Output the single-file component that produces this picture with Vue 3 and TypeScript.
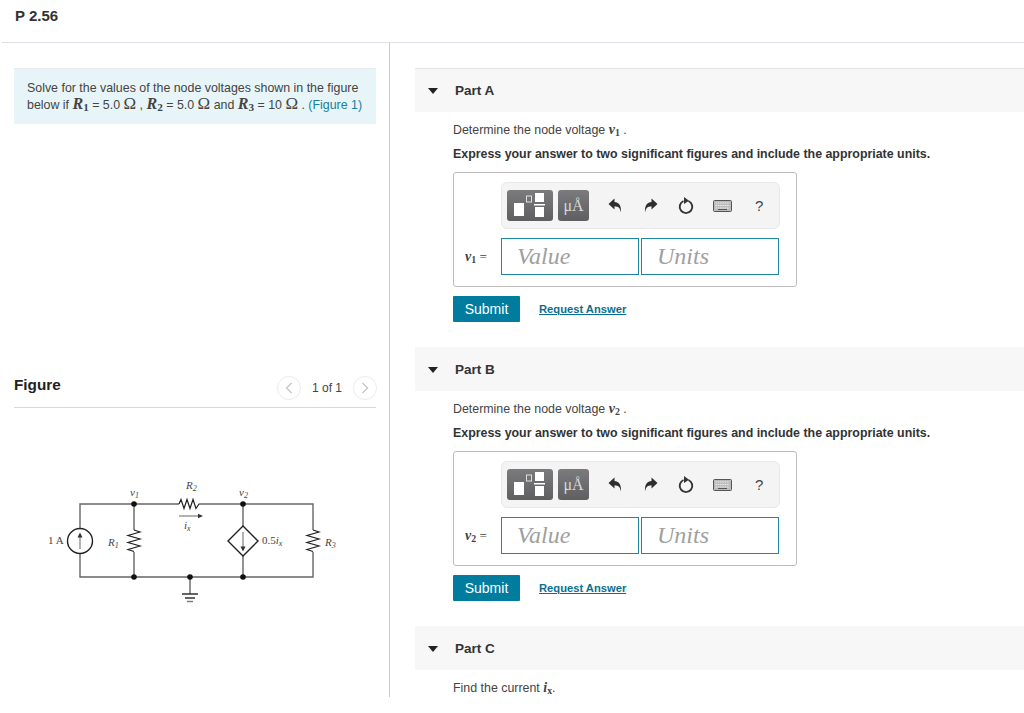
<script setup lang="ts">
interface Part { id: string; sym: string; sub: string }
const parts: Part[] = [
  { id: 'A', sym: 'v', sub: '1' },
  { id: 'B', sym: 'v', sub: '2' },
]
</script>

<template>
  <div class="page">
    <header class="top"><h1>P 2.56</h1></header>
    <main class="cols">
      <section class="left">
        <div class="intro">
          Solve for the values of the node voltages shown in the figure<br />
          below if <span class="m big">R<sub>1</sub></span> = 5.0 <span class="om">Ω</span> , <span class="m big">R<sub>2</sub></span> = 5.0 <span class="om">Ω</span> and <span class="m big">R<sub>3</sub></span> = 10 <span class="om">Ω</span> . <span class="link">(Figure 1)</span>
        </div>
        <div class="fig-head">
          <h2>Figure</h2>
          <div class="pager">
            <span class="round"><svg width="8" height="12" viewBox="0 0 8 12"><path d="M6.5 1 1.5 6l5 5" fill="none" stroke="#c4c4c4" stroke-width="1.3" /></svg></span>
            <span class="count">1 of 1</span>
            <span class="round"><svg width="8" height="12" viewBox="0 0 8 12"><path d="M1.5 1l5 5-5 5" fill="none" stroke="#c4c4c4" stroke-width="1.3" /></svg></span>
          </div>
        </div>
        <div class="figure">
          <svg width="362" height="150" viewBox="14 465 362 150">
            <g fill="none" stroke="#666" stroke-width="1.4">
              <path d="M80 528V504H179M201 504H313V530M313 552V577H80V554" />
              <path d="M134 504V530M134 552V577M243 504V526M243 556V577M190 577V594" />
              <path d="M179 504l2-4.500 3 9 3-9 3 9 3-9 3 9 3-4.500h2" stroke="#222" stroke-width="1.200" />
              <path d="M134 530l6 2-12 3.500 12 3.500-12 3.500 12 3.500-12 3.500 6 2" stroke="#222" stroke-width="1.200" />
              <path d="M313 530l6 2-12 3.500 12 3.500-12 3.500 12 3.500-12 3.500 6 2" stroke="#222" stroke-width="1.200" />
              <circle cx="80" cy="541" r="12.500" stroke="#222" stroke-width="1.400" />
              <path d="M243 526l15 15-15 15-15-15z" stroke="#222" />
              <path d="M80 549V534M243 532V549M179 516H200" stroke-width="1" />
              <path d="M182 594H198M185 598H195" stroke="#333" />
              <path d="M187 601.500H193" stroke="#777" />
            </g>
            <g fill="#333">
              <path d="M80 532.500l-2.500 5h5zM243 551.500l-2.500-5h5zM203 516l-5-2.200v4.400z" />
            </g>
            <g fill="#111">
              <circle cx="134" cy="504" r="2.800" />
              <circle cx="243" cy="504" r="2.800" />
              <circle cx="134" cy="577" r="2.800" />
              <circle cx="190" cy="577" r="2.800" />
              <circle cx="243" cy="577" r="2.800" />
            </g>
            <g class="fig-t">
              <text x="48" y="544">1 A</text>
              <text x="108" y="546" font-style="italic">R<tspan class="s" dy="2">1</tspan></text>
              <text x="130" y="496" font-style="italic">v<tspan class="s" dy="2">1</tspan></text>
              <text x="186" y="489" font-style="italic">R<tspan class="s" dy="2">2</tspan></text>
              <text x="184" y="529" font-style="italic">i<tspan class="s" dy="2">x</tspan></text>
              <text x="239" y="496" font-style="italic">v<tspan class="s" dy="2">2</tspan></text>
              <text x="262" y="544">0.5<tspan font-style="italic">i</tspan><tspan class="s" font-style="italic" dy="2">x</tspan></text>
              <text x="325" y="546" font-style="italic">R<tspan class="s" dy="2">3</tspan></text>
            </g>
          </svg>
        </div>
      </section>

      <section class="right">
        <article v-for="p in parts" :key="p.id" class="part">
          <div class="part-head">
            <span class="caret"></span>
            <span class="part-name">Part {{ p.id }}</span>
          </div>
          <div class="part-body">
            <p class="q">Determine the node voltage <span class="m bold">{{ p.sym }}<sub>{{ p.sub }}</sub></span> .</p>
            <p class="ex">Express your answer to two significant figures and include the appropriate units.</p>
            <div class="answer">
              <div class="toolbar">
                <span class="tbtn tpl">
                  <svg width="46" height="31" viewBox="0 0 46 31">
                    <rect x="7" y="13" width="10" height="13" fill="#fff" />
                    <rect x="19.500" y="6" width="5" height="6" fill="none" stroke="#ddd" />
                    <rect x="28" y="3" width="9" height="9" fill="#fff" />
                    <rect x="27" y="14" width="11" height="1.500" fill="#fff" />
                    <rect x="28" y="17" width="9" height="10" fill="#fff" />
                  </svg>
                </span>
                <span class="tbtn unit">μÅ</span>
                <svg class="ic" style="margin-left:19px" width="14" height="15" viewBox="0 0 14 15"><path d="M0.500 6 6.500 .500v3.500c4 .300 7 3 6.500 10.500-1-4.500-2.500-6-6.500-6.200v3.200z" fill="#2e2e2e" /></svg>
                <svg class="ic" style="margin-left:22px" width="14" height="15" viewBox="0 0 14 15"><path d="M13.500 6 7.500 .500v3.500c-4 .300-7 3-6.500 10.500 1-4.500 2.500-6 6.500-6.200v3.200z" fill="#2e2e2e" /></svg>
                <svg class="ic" style="margin-left:20px" width="16" height="19" viewBox="0 0 16 19"><path d="M10.500 5a6.300 6.300 0 1 1-5 0" fill="none" stroke="#333" stroke-width="1.900" /><path d="M6 1l5 3.800-5 3.200z" fill="#333" /></svg>
                <svg class="ic" style="margin-left:19px" width="19" height="12" viewBox="0 0 19 12"><rect x=".500" y=".500" width="18" height="11" rx="1" fill="#bbb" stroke="#555" /><path d="M2.500 3h14M2.500 5.500h14M2.500 8h14" stroke="#eee" stroke-width="1" stroke-dasharray="1.500 .8" /><path d="M5 9.500h9" stroke="#555" /></svg>
                <span class="help">?</span>
              </div>
              <div class="row">
                <span class="lbl"><span class="m bold">{{ p.sym }}<sub>{{ p.sub }}</sub></span> =</span>
                <span class="field">Value</span>
                <span class="field second">Units</span>
              </div>
            </div>
            <div class="actions">
              <span class="submit">Submit</span>
              <span class="req">Request Answer</span>
            </div>
          </div>
        </article>
        <article class="part last">
          <div class="part-head">
            <span class="caret"></span>
            <span class="part-name">Part C</span>
          </div>
          <div class="part-body">
            <p class="q">Find the current <span class="m bold">i<sub>x</sub></span>.</p>
          </div>
        </article>
      </section>
    </main>
  </div>
</template>

<style scoped>
.page {
  width: 1024px;
  height: 713px;
  overflow: hidden;
  background: #fff;
  font-family: "Liberation Sans", Arial, sans-serif;
  font-size: 12.400px;
  color: #333;
}
.top {
  height: 42px;
  margin-left: 2px;
  border-bottom: 1px solid #dcdfe4;
  box-sizing: content-box;
}
h1 {
  margin: 0;
  padding: 8px 0 0 13px;
  font-size: 15px;
  line-height: 16px;
  font-weight: 700;
  color: #333;
}
.cols {
  display: flex;
  height: 654px;
}
.left {
  width: 362px;
  padding: 25px 13px 0 14px;
  border-right: 1px solid #c6ccd6;
}
.intro {
  height: 56px;
  box-sizing: border-box;
  border-top: 1px solid #e6eaea;
  background: #e7f5f8;
  padding: 12px 0 0 13px;
  line-height: 15px;
  color: #444;
  white-space: nowrap;
}
sub {
  font-size: 70%;
  line-height: 0;
  vertical-align: -2px;
  font-style: normal;
}
.m {
  font-family: "Liberation Serif", serif;
  font-style: italic;
}
.big {
  font-size: 16px;
  font-weight: 700;
  color: #444;
}
.bold {
  font-size: 14px;
  font-weight: 700;
  color: #444;
}
.om {
  font-family: "Liberation Serif", serif;
  font-size: 17px;
  line-height: 12px;
}
.link {
  color: #1a7f9c;
}
.fig-head {
  display: flex;
  justify-content: space-between;
  align-items: center;
  height: 40px;
  margin-top: 244px;
  border-bottom: 1px solid #d5d8de;
  box-sizing: border-box;
  padding-bottom: 5px;
}
h2 {
  margin: 0;
  font-size: 15.300px;
  font-weight: 700;
  color: #222;
}
.pager {
  display: flex;
  align-items: center;
  margin-top: 6px;
  margin-right: -1px;
  color: #444;
}
.round {
  width: 24px;
  height: 24px;
  box-sizing: border-box;
  border: 1px solid #ececec;
  border-radius: 50%;
  display: flex;
  align-items: center;
  justify-content: center;
}
.count {
  margin: 0 11px 0 11px;
  font-size: 12px;
}
.figure {
  display: flex;
  margin-top: 57px;
}
.fig-t text {
  font-family: "Liberation Serif", serif;
  font-size: 11px;
  fill: #444;
}
.fig-t .s {
  font-size: 8px;
}
.right {
  flex: 1;
  min-width: 0;
  padding: 25px 0 0 25px;
}
.part {
  height: 279px;
}
.part-head {
  height: 44px;
  box-sizing: border-box;
  border-top: 1px solid #e4e4e4;
  background: #f7f7f7;
  display: flex;
  align-items: center;
  padding-left: 13px;
}
.part + .part .part-head {
  border-top-color: #f7f7f7;
}
.caret {
  width: 0;
  height: 0;
  border-left: 5.500px solid transparent;
  border-right: 5.500px solid transparent;
  border-top: 6px solid #222;
}
.part-name {
  margin-left: 17px;
  font-weight: 700;
  font-size: 13.500px;
  color: #333;
}
.part-body {
  padding: 10px 0 0 38px;
}
p {
  margin: 0;
}
.q {
  height: 16px;
  line-height: 16px;
  color: #444;
}
.ex {
  margin-top: 8px;
  height: 16px;
  line-height: 16px;
  font-weight: 700;
  font-size: 12.400px;
  color: #333;
  white-space: nowrap;
}
.answer {
  margin-top: 10px;
  width: 344px;
  height: 115px;
  box-sizing: border-box;
  border: 1px solid #bdbdbd;
  border-radius: 3px;
  padding: 9px 16px 0 47px;
}
.toolbar {
  height: 47px;
  box-sizing: border-box;
  background: #f4f4f4;
  border: 1px solid #e8e8e8;
  border-radius: 6px;
  display: flex;
  align-items: center;
  padding-left: 5px;
}
.tbtn {
  height: 31px;
  box-sizing: border-box;
  border-radius: 3px;
  background: linear-gradient(#7b7b7d, #5f5f61);
  display: flex;
  align-items: center;
  justify-content: center;
}
.tpl {
  width: 46px;
}
.unit {
  width: 31px;
  margin-left: 5px;
  color: #d8d8d8;
  font-family: "Liberation Serif", serif;
  font-size: 16px;
}
.ic {
  flex: none;
}
.help {
  margin-left: 23px;
  font-family: "Liberation Sans", sans-serif;
  font-size: 15px;
  color: #444;
}
.row {
  display: flex;
  align-items: center;
  margin-top: 9px;
  margin-left: -37px;
}
.lbl {
  width: 34px;
  padding-left: 1px;
  white-space: nowrap;
  color: #444;
  font-size: 13px;
  font-family: "Liberation Serif", serif;
  margin-right: 2px;
}
.field {
  width: 138px;
  height: 37px;
  box-sizing: border-box;
  border: 1px solid #1f87a4;
  font-family: "Liberation Serif", serif;
  font-style: italic;
  font-size: 24px;
  line-height: 35px;
  padding-left: 15px;
  color: #a0a0a0;
}
.second {
  margin-left: 2px;
}
.actions {
  display: flex;
  align-items: center;
  margin-top: 9px;
}
.submit {
  width: 67px;
  height: 26px;
  background: #007c9e;
  color: #fff;
  font-size: 14px;
  line-height: 26px;
  text-align: center;
  border-radius: 1px;
}
.req {
  margin-left: 19px;
  color: #0a6f8f;
  font-weight: 700;
  font-size: 11.200px;
  text-decoration: underline;
}
</style>

<style>
html, body { margin: 0; overflow: hidden; background: #fff; }
</style>
